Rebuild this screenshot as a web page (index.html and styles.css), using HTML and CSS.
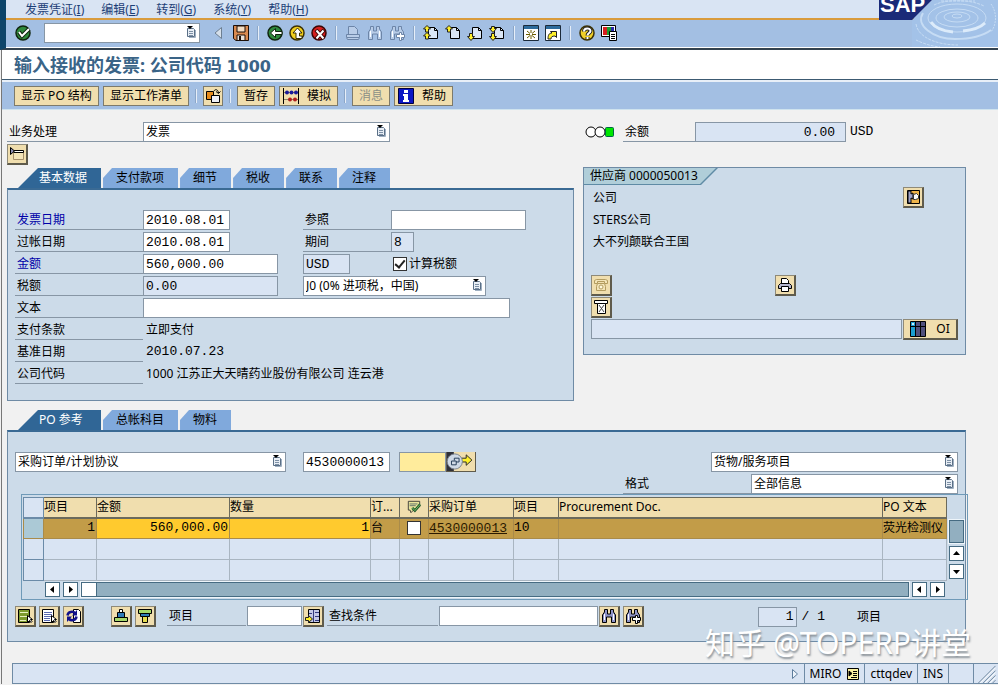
FILE: index.html
```html
<!DOCTYPE html>
<html lang="zh-CN">
<head>
  <meta charset="UTF-8" />
  <meta name="viewport" content="width=device-width, initial-scale=1.0" />
  <title>输入接收的发票: 公司代码 1000</title>
  <link rel="stylesheet" href="styles.css">
</head>
<body>
  <!-- Icon set -->
  <svg class="sprite" aria-hidden="true">
    <symbol id="i-list" viewBox="0 0 10 12">
      <path d="M1.5 2.5h6l1 1v7h-7z" fill="#e8eef5" stroke="#5a6f86"/>
      <path d="M9.5 4v7.5H3" fill="none" stroke="#9fb0c2"/>
      <path d="M3 5.5h4M3 7.5h4M3 9.5h4" stroke="#7d90a5"/>
      <path d="M1 0h6L4 3z" fill="#000"/>
    </symbol>
    <symbol id="i-ok" viewBox="0 0 16 16">
      <circle cx="8" cy="8" r="7" fill="#2f8a3c" stroke="#10240f" stroke-width="1.5"/>
      <path d="M4 7l3 4 7-7" fill="none" stroke="#10240f" stroke-width="4"/>
      <path d="M4 7l3 4 7-7" fill="none" stroke="#fff" stroke-width="2"/>
    </symbol>
    <symbol id="i-tri" viewBox="0 0 16 16">
      <path d="M10.500 2.500v11L4 8z" fill="#d5dfea" stroke="#6d7f92"/>
    </symbol>
    <symbol id="i-save" viewBox="0 0 16 16">
      <path d="M.5 .5h15v15H3l-2.500-2z" fill="#d98a50" stroke="#1c0f08"/>
      <path d="M4 1h8v6H4z" fill="#f3dcc0" stroke="#1c0f08"/>
      <path d="M4 15v-5h8v5" fill="#e8e2da" stroke="#1c0f08"/>
      <path d="M6 11h2v4H6z" fill="#1c0f08"/>
    </symbol>
    <symbol id="i-back" viewBox="0 0 16 16">
      <circle cx="8" cy="8" r="7" fill="#2f8a3c" stroke="#10240f" stroke-width="1.500"/>
      <path d="M3.500 8l5-4.500v3H15v3H8.500v3z" fill="#fff" stroke="#10240f"/>
    </symbol>
    <symbol id="i-exit" viewBox="0 0 16 16">
      <circle cx="8" cy="8" r="7" fill="#f2cf1d" stroke="#3b3004" stroke-width="1.500"/>
      <path d="M8.500 3l4.500 5h-2.500v3H13v2.500H7V8H4z" fill="#fff" stroke="#3b3004"/>
    </symbol>
    <symbol id="i-cancel" viewBox="0 0 16 16">
      <circle cx="8" cy="8" r="7" fill="#d61f1f" stroke="#3a0505" stroke-width="1.500"/>
      <path d="M5 5l8 9M13 5l-8 9" stroke="#3a0505" stroke-width="4"/>
      <path d="M5.500 5.500l7 8M12.500 5.500l-7 8" stroke="#fff" stroke-width="2"/>
    </symbol>
    <symbol id="i-print-off" viewBox="0 0 16 16">
      <path d="M3.500 9.500v-8h6l3 3v5z" fill="#b9cde8" stroke="#6c85a8"/>
      <path d="M1.500 9.500h13v3l-1 2h-11l-1-2zM2 12.500h12" fill="#b9cde8" stroke="#6c85a8"/>
    </symbol>
    <symbol id="i-find" viewBox="0 0 16 16">
      <path d="M1.500 14.500V7l2-3V1.500h3V6h3V1.500h3V4l2 3v7.500h-4V9h-5v5.500z" fill="var(--fill,#8f94c8)" stroke="var(--ink,#000)"/>
      <path d="M3.500 6v6M12.500 6v6" stroke="#fff"/>
    </symbol>
    <symbol id="i-find-next" viewBox="0 0 16 16">
      <path d="M1.500 14.500V7l2-3V1.500h3V6h3V1.500h3V4l2 3v7.500h-4V9h-5v5.500z" fill="var(--fill,#8f94c8)" stroke="var(--ink,#000)"/>
      <path d="M3.500 6v6" stroke="#fff"/>
      <path d="M10.500 7.500h2v2h3v3h-3v3h-2v-3h-3v-3h3z" fill="#fff" stroke="var(--ink,#000)"/>
    </symbol>
    <symbol id="i-page" viewBox="0 0 16 16">
      <path d="M5.500 2.500h6l3 3v8h-9z" fill="#dbe7f6" stroke="#000"/>
      <path d="M11.500 2.500v3h3" fill="none" stroke="#000"/>
    </symbol>
    <symbol id="i-up" viewBox="0 0 8 8">
      <path d="M4 .5l3.500 3.500H5.500v3h-3V4H.5z" fill="#fff029" stroke="#222" />
    </symbol>
    <symbol id="i-first" viewBox="0 0 16 16">
      <use href="#i-page"/><use href="#i-up" width="8" height="8"/><use href="#i-up" y="7" width="8" height="8"/>
    </symbol>
    <symbol id="i-prev" viewBox="0 0 16 16">
      <use href="#i-page"/><use href="#i-up" width="8" height="8"/>
    </symbol>
    <symbol id="i-next" viewBox="0 0 16 16">
      <use href="#i-page"/><path d="M2.500 8.500h3v3h2L4 15.500.5 11.500h2z" fill="#fff029" stroke="#222"/>
    </symbol>
    <symbol id="i-last" viewBox="0 0 16 16">
      <use href="#i-page"/>
      <path d="M2.500 1.500h3v2h2L4 7.500.5 3.500h2zM2.500 8.500h3v3h2L4 15.500.5 11.500h2z" fill="#fff029" stroke="#222"/>
    </symbol>
    <symbol id="i-session" viewBox="0 0 16 16">
      <path d="M.5.5h15v15H.5z" fill="#fff" stroke="#1b2a3a"/>
      <path d="M1 1h14v3H1z" fill="#2d6b9c"/>
      <path d="M8 5v3M8 10v4M3 9.500h4M9 9.500h4M4 6l3 2.500M12 6L9 8.500M4 13l3-2.500M12 13l-3-2.500" stroke="#6a5c00"/>
    </symbol>
    <symbol id="i-shortcut" viewBox="0 0 16 16">
      <path d="M.5.5h15v15H.5z" fill="#fff" stroke="#1b2a3a"/>
      <path d="M1 1h14v3H1z" fill="#2d6b9c"/>
      <path d="M3 14c0-4 1-6 4-6L5.500 6.500h6v6L10 11c-3 0-4 1-4 3z" fill="#fff029" stroke="#222"/>
    </symbol>
    <symbol id="i-help" viewBox="0 0 16 16">
      <circle cx="8" cy="8" r="7" fill="#f0cf28" stroke="#3b3004" stroke-width="1.500"/>
      <path d="M5 6.500C5 2.500 11.500 2.500 11.500 6c0 2-3 2-3 4.500M8.500 12v2" fill="none" stroke="#222" stroke-width="4"/>
      <path d="M5 6.500C5 2.500 11.500 2.500 11.500 6c0 2-3 2-3 4.500M8.500 12v2" fill="none" stroke="#fff" stroke-width="2"/>
    </symbol>
    <symbol id="i-layout" viewBox="0 0 16 16">
      <path d="M.5.5h14v11H.5z" fill="#fff" stroke="#000"/>
      <path d="M2 2h4v8H2z" fill="#d61f1f"/><path d="M6 2h4v8H6z" fill="#1e9b2d"/><path d="M10 2h3v8h-3z" fill="#2626a8"/>
      <path d="M8.500 6.500h7v9h-7z" fill="#fff" stroke="#000"/>
      <path d="M10 9.500h4M10 11.500h4M10 13.500h4" stroke="#000"/>
    </symbol>
    <symbol id="i-other" viewBox="0 0 16 16">
      <path d="M1.500 3.500h7v8h-7z" fill="#e58a1a" stroke="#000"/>
      <path d="M6.500 7.500h8v7h-8z" fill="#eef0f6" stroke="#000"/>
      <path d="M9 3c1-2 4-2 4.500 2M11 3.500l2.500 2 2-2" fill="none" stroke="#000"/>
    </symbol>
    <symbol id="i-simulate" viewBox="0 0 16 16">
      <path d="M.5 0v16M15.500 0v16" stroke="#000"/>
      <path d="M1 4.500h14M1 11.500h14" stroke="#8a8468"/>
      <circle cx="4" cy="4.500" r="2" fill="#1a1a9a"/><circle cx="8.500" cy="4.500" r="2" fill="#1a1a9a"/><circle cx="13" cy="4.500" r="2" fill="#1a1a9a"/>
      <circle cx="7" cy="11.500" r="2" fill="#b01c1c"/><circle cx="12" cy="11.500" r="2" fill="#b01c1c"/>
    </symbol>
    <symbol id="i-info" viewBox="0 0 16 16">
      <path d="M.5.5h15v15H.5z" fill="#0b16c4" stroke="#000040"/>
      <path d="M6 2h4v3H6zM5 6h5v6h1v2H5v-2h1V8H5z" fill="#fff"/>
    </symbol>
    <symbol id="i-folder" viewBox="0 0 16 16">
      <path d="M4.500 6v7.500h10V6" fill="#f3e4b8" stroke="#a58e6a"/>
      <path d="M1.500 1.500v7l4-3.500z" fill="#8c8cb0" stroke="#000"/>
      <path d="M5 4.500h9.500v2H5z" fill="#fff" stroke="#000"/>
    </symbol>
    <symbol id="i-vendor" viewBox="0 0 16 16">
      <path d="M2.500 1.500h12v13h-12z" fill="#f0b54a" stroke="#000"/>
      <path d="M3 2h3v3l2-1v6l-2-1v5H3z" fill="#9ea2c8" stroke="#000"/>
      <path d="M8.500 5.500l3-1 2 2v3l-3 1h-2z" fill="#fff" stroke="#333"/>
    </symbol>
    <symbol id="i-phone" viewBox="0 0 16 16">
      <path d="M1.500 6.500v-3l2-1h9l2 1v3h-3v-2h-7v2z" fill="#f3e4b8" stroke="#b39c5f"/>
      <path d="M4.500 6.500h7l1 3v4h-9v-4z" fill="#f3e4b8" stroke="#b39c5f"/>
      <circle cx="8" cy="10" r="2" fill="#fff8dc" stroke="#b39c5f"/>
    </symbol>
    <symbol id="i-mail" viewBox="0 0 16 16">
      <path d="M1.500 1.500h13v3h-13z" fill="#fff" stroke="#000"/>
      <path d="M4.500 4.500h8v10h-8z" fill="#fff" stroke="#000"/>
      <path d="M6 6l5 7M11 6l-5 7" stroke="#444"/>
    </symbol>
    <symbol id="i-print" viewBox="0 0 16 16">
      <path d="M4.500 6.500v-5h5l2 2v3z" fill="#fff" stroke="#000"/>
      <path d="M3.500 6.500h9l2 2v3h-13v-3z" fill="#b6b8cf" stroke="#000"/>
      <path d="M4.500 9.500h7v5h-7z" fill="#fff" stroke="#000"/>
    </symbol>
    <symbol id="i-grid" viewBox="0 0 16 16">
      <path d="M.5.500h15v15H.5z" fill="#50507c" stroke="#000"/>
      <path d="M1 1h4v14H1z" fill="#1b9ed0"/>
      <path d="M5.500 1v14M10.500 1v14M1 5.500h14" stroke="#000"/>
      <path d="M2 2h2v2H2z" fill="#c9ecfa"/>
    </symbol>
    <symbol id="i-note" viewBox="0 0 16 16">
      <path d="M1.500 1.500h13v6l-4 4h-3l-3 3-1-3h-2z" fill="#e9e59b" stroke="#333"/>
      <path d="M3 4.500h9M3 6.500h7" stroke="#566"/>
      <path d="M6 9l3 3 6-7" fill="none" stroke="#1c5a2a" stroke-width="3"/>
      <path d="M6 9l3 3 6-7" fill="none" stroke="#86c96f"/>
    </symbol>
    <symbol id="i-go" viewBox="0 0 30 20">
      <path d="M0 0h8v20H0z" fill="#2f3038"/>
      <path d="M16 6.500h5V3l6 5.500-6 5.500v-3.500h-5z" fill="#fff029" stroke="#222"/>
      <circle cx="9" cy="10" r="8" fill="#cfd9e6" stroke="#777f8c"/>
      <path d="M5.500 9.500h5v4h-5zM8.500 9V6.500h5v4h-3" fill="none" stroke="#223a55"/>
    </symbol>
    <symbol id="i-sel-all" viewBox="0 0 16 16">
      <path d="M1.500 1.500h11v13h-11z" fill="#7d9a2c" stroke="#000"/>
      <path d="M3 4.500h8M3 8.500h8M3 12.500h6" stroke="#e9f2c0"/>
      <path d="M10.500 7.500v7l2-2 1.500 2 1-1-1.500-2h2z" fill="#fff" stroke="#000"/>
    </symbol>
    <symbol id="i-desel" viewBox="0 0 16 16">
      <path d="M1.500 1.500h11v13h-11z" fill="#fff" stroke="#000"/>
      <path d="M3 4.500h8M3 6.500h8M3 8.500h7M3 10.500h6M3 12.500h6" stroke="#5a68b0"/>
      <path d="M10.500 7.500v7l2-2 1.500 2 1-1-1.500-2h2z" fill="#fff" stroke="#000"/>
    </symbol>
    <symbol id="i-refresh" viewBox="0 0 16 16">
      <path d="M8.500 1.500h5l2 2v11h-7z" fill="#fff" stroke="#000"/>
      <path d="M2.500 7.500C3 3.500 8 3 10 5M11.500 8.500c-.5 4-5.500 4.500-7.500 2.500" fill="none" stroke="#10108a" stroke-width="2.500"/>
      <path d="M12 2v5.500H7zM2 14V8.500h5z" fill="#10108a"/>
    </symbol>
    <symbol id="i-asc" viewBox="0 0 16 16">
      <path d="M6.500 1.500h3v3h-3z" fill="#fff" stroke="#000"/>
      <path d="M4.500 4.500h7v5h-7z" fill="#2f7ab8" stroke="#000"/>
      <path d="M1.500 9.500h13v4h-13z" fill="#a6d86a" stroke="#000"/>
    </symbol>
    <symbol id="i-desc" viewBox="0 0 16 16">
      <path d="M1.500 1.500h13v4h-13z" fill="#a6d86a" stroke="#000"/>
      <path d="M3.500 5.500h9v3h-9z" fill="#2f7ab8" stroke="#000"/>
      <path d="M5.500 8.500h5v6h-5z" fill="#e6dc50" stroke="#000"/>
    </symbol>
    <symbol id="i-position" viewBox="0 0 16 16">
      <path d="M3.500 1.500h11v13h-11z" fill="#c5cae8" stroke="#000"/>
      <path d="M8.500 2v12M10 4.500h4M10 8.500h4M10 12.500h4M4 5.500h3" stroke="#343c80"/>
      <path d="M.5 9.500h3v-2l4 3.500-4 3.500v-2h-3z" fill="#fff029" stroke="#222"/>
    </symbol>
    <symbol id="i-detail" viewBox="0 0 12 12">
      <path d="M.5.500h11v11H.5z" fill="#fdf3a0" stroke="#000"/>
      <path d="M2 3l3 2.500L2 8zM6 3.500h4M6 5.500h4M6 7.500h4M4 9.500h6" stroke="#000"/>
    </symbol>
  </svg>

  <header class="top">
    <nav class="menu">
      <a href="#">发票凭证(<u>I</u>)</a>
      <a href="#">编辑(<u>E</u>)</a>
      <a href="#">转到(<u>G</u>)</a>
      <a href="#">系统(<u>Y</u>)</a>
      <a href="#">帮助(<u>H</u>)</a>
    </nav>
    <div class="toolbar">
      <button class="ic" aria-label="回车"><svg><use href="#i-ok"/></svg></button>
      <div class="pick command">
        <input type="text" aria-label="命令">
        <svg><use href="#i-list"/></svg>
      </div>
      <button class="ic" aria-label="收起"><svg><use href="#i-tri"/></svg></button>
      <button class="ic" aria-label="保存"><svg><use href="#i-save"/></svg></button>
      <span class="sep"></span>
      <button class="ic" aria-label="返回"><svg><use href="#i-back"/></svg></button>
      <button class="ic" aria-label="退出"><svg><use href="#i-exit"/></svg></button>
      <button class="ic" aria-label="取消"><svg><use href="#i-cancel"/></svg></button>
      <span class="sep"></span>
      <button class="ic off" aria-label="打印" disabled><svg><use href="#i-print-off"/></svg></button>
      <button class="ic off" aria-label="查找" disabled><svg><use href="#i-find"/></svg></button>
      <button class="ic off" aria-label="查找下一个" disabled><svg><use href="#i-find-next"/></svg></button>
      <span class="sep"></span>
      <button class="ic" aria-label="首页"><svg><use href="#i-first"/></svg></button>
      <button class="ic" aria-label="上一页"><svg><use href="#i-prev"/></svg></button>
      <button class="ic" aria-label="下一页"><svg><use href="#i-next"/></svg></button>
      <button class="ic" aria-label="末页"><svg><use href="#i-last"/></svg></button>
      <span class="sep"></span>
      <button class="ic" aria-label="新会话"><svg><use href="#i-session"/></svg></button>
      <button class="ic" aria-label="快捷方式"><svg><use href="#i-shortcut"/></svg></button>
      <span class="sep"></span>
      <button class="ic" aria-label="帮助"><svg><use href="#i-help"/></svg></button>
      <button class="ic" aria-label="布局"><svg><use href="#i-layout"/></svg></button>
    </div>
    <svg class="banner" viewBox="0 0 119 47" role="img" aria-label="SAP">
      <path d="M53 0h66v47H33V20z" fill="#a3c2e8"/>
      <g fill="none" stroke="#c6dcf4">
        <ellipse cx="78" cy="16" rx="5" ry="2"/>
        <ellipse cx="78" cy="17" rx="13" ry="5"/>
        <ellipse cx="78" cy="18" rx="21" ry="9"/>
        <ellipse cx="78" cy="18" rx="29" ry="14"/>
        <path d="M44 13c-8 12 10 26 32 26 14 0 28-3 36-9" stroke-width="2"/>
        <path d="M55 5c12-6 36-6 50 1M37 24c2 14 22 21 42 21M37 40c6 3 14 6 24 7M62 1h34" stroke-dasharray="3 1"/>
        <path d="M52 22c4 6 12 9 22 10M84 31c10-1 18-4 22-8" stroke="#dcebfa" stroke-width="3"/>
        <path d="M112 4c6 8 6 20 0 28" stroke-dasharray="2 1"/>
      </g>
      <path d="M0 0h53L33 20H0z" fill="#1b2a78"/>
      <text x="1" y="12" class="logo-text">SAP</text>
    </svg>
  </header>

  <div class="session">
    <h1>输入接收的发票: 公司代码 <span>1000</span></h1>

    <div class="app-bar">
      <button class="btn">显示 PO 结构</button>
      <button class="btn">显示工作清单</button>
      <span class="sep"></span>
      <button class="btn only" aria-label="其他发票凭证"><svg><use href="#i-other"/></svg></button>
      <span class="sep"></span>
      <button class="btn">暂存</button>
      <button class="btn"><svg><use href="#i-simulate"/></svg>模拟</button>
      <span class="sep"></span>
      <button class="btn" disabled>消息</button>
      <button class="btn"><svg><use href="#i-info"/></svg>帮助</button>
    </div>

    <main>
      <div class="upper">
        <section class="left">
          <div class="line">
            <label class="lbl lead" for="trans">业务处理</label>
            <div class="pick w-trans"><select id="trans"><option>发票</option></select><svg><use href="#i-list"/></svg></div>
          </div>
          <button class="sq" aria-label="显示概览"><svg><use href="#i-folder"/></svg></button>

          <div class="tabs" role="tablist">
            <button class="tab on" role="tab" aria-selected="true">基本数据</button>
            <button class="tab" role="tab">支付款项</button>
            <button class="tab" role="tab">细节</button>
            <button class="tab" role="tab">税收</button>
            <button class="tab" role="tab">联系</button>
            <button class="tab" role="tab">注释</button>
          </div>
          <div class="panel basic">
            <label class="lbl req" for="invdate">发票日期</label>
            <input class="w-date" id="invdate" value="2010.08.01">
            <label class="lbl" for="ref">参照</label>
            <input class="w-amt" id="ref">

            <label class="lbl" for="postdate">过帐日期</label>
            <input class="w-date" id="postdate" value="2010.08.01">
            <label class="lbl" for="period">期间</label>
            <input class="w-num" id="period" value="8" readonly>

            <label class="lbl req" for="amount">金额</label>
            <input class="w-amt" id="amount" value="560,000.00">
            <input class="w-cur" aria-label="货币" value="USD" readonly>
            <label class="check"><input type="checkbox" checked>计算税额</label>

            <label class="lbl" for="tax">税额</label>
            <input class="w-amt" id="tax" value="0.00" readonly>
            <div class="pick w-tax"><select aria-label="税码"><option>J0 (0% 进项税，中国)</option></select><svg><use href="#i-list"/></svg></div>

            <label class="lbl" for="text">文本</label>
            <input class="w-text" id="text">

            <span class="lbl">支付条款</span>
            <span class="val">立即支付</span>
            <span class="lbl">基准日期</span>
            <span class="val mono">2010.07.23</span>
            <span class="lbl">公司代码</span>
            <span class="val">1000 江苏正大天晴药业股份有限公司 连云港</span>
          </div>
        </section>

        <section class="right">
          <div class="line balance">
            <svg class="lights" viewBox="0 0 30 12">
              <circle cx="6" cy="6" r="5" fill="#fff" stroke="#000"/>
              <circle cx="15" cy="6" r="5" fill="#fff" stroke="#000"/>
              <rect x="20.500" y="1.500" width="8" height="9" rx="1" fill="#00e600" stroke="#064"/>
            </svg>
            <label class="lbl w-bal-lbl" for="balance">余额</label>
            <input class="w-bal num" id="balance" value="0.00" readonly>
            <span class="mono unit">USD</span>
          </div>
          <div class="vendor">
            <h2><span>供应商 0000050013</span></h2>
            <div class="vendor-head">
              <address>公司<br>STERS公司<br>大不列颠联合王国</address>
              <button class="sq" aria-label="供应商主数据"><svg><use href="#i-vendor"/></svg></button>
            </div>
            <div class="contact">
              <div>
                <button class="sq" aria-label="电话" disabled><svg><use href="#i-phone"/></svg></button>
                <button class="sq" aria-label="邮件"><svg><use href="#i-mail"/></svg></button>
              </div>
              <button class="sq" aria-label="打印"><svg><use href="#i-print"/></svg></button>
            </div>
            <div class="bank">
              <input aria-label="银行" readonly>
              <button class="sq wide"><svg><use href="#i-grid"/></svg>OI</button>
            </div>
          </div>
        </section>
      </div>

      <div class="tabs" role="tablist">
        <button class="tab on" role="tab" aria-selected="true">PO 参考</button>
        <button class="tab" role="tab">总帐科目</button>
        <button class="tab" role="tab">物料</button>
      </div>
      <div class="panel po">
        <div class="po-filter">
          <div class="pick w-ref"><select aria-label="参考凭证类别"><option>采购订单/计划协议</option></select><svg><use href="#i-list"/></svg></div>
          <input class="w-date" aria-label="采购订单" value="4530000013">
          <div class="go">
            <input aria-label="项目" class="hot">
            <button aria-label="多重选择"><svg><use href="#i-go"/></svg></button>
          </div>
          <div class="po-view">
            <div class="pick w-trans"><select aria-label="项目类型"><option>货物/服务项目</option></select><svg><use href="#i-list"/></svg></div>
            <div class="line">
              <label class="lbl w-fmt" for="fmt">格式</label>
              <div class="pick w-layout"><select id="fmt"><option>全部信息</option></select><svg><use href="#i-list"/></svg></div>
            </div>
          </div>
        </div>

        <div class="grid-box">
          <table>
            <colgroup>
              <col class="c-sel"><col class="c-item"><col class="c-amt"><col class="c-qty"><col class="c-unit">
              <col class="c-unit"><col class="c-po"><col class="c-poitem"><col><col class="c-text">
            </colgroup>
            <thead>
              <tr>
                <th></th><th>项目</th><th>金额</th><th>数量</th><th>订...</th>
                <th class="mid"><svg><use href="#i-note"/></svg></th>
                <th>采购订单</th><th>项目</th><th>Procurement Doc.</th><th>PO 文本</th>
              </tr>
            </thead>
            <tbody>
              <tr class="picked">
                <td></td><td class="num">1</td><td class="num edit">560,000.00</td><td class="num edit">1</td><td>台</td>
                <td class="mid"><input type="checkbox" aria-label="已记帐"></td>
                <td><a href="#" class="mono">4530000013</a></td><td class="mono">10</td><td></td><td>荧光检测仪</td>
              </tr>
              <tr><td></td><td></td><td></td><td></td><td></td><td></td><td></td><td></td><td></td><td></td></tr>
              <tr><td></td><td></td><td></td><td></td><td></td><td></td><td></td><td></td><td></td><td></td></tr>
            </tbody>
          </table>
          <div class="vscroll">
            <span class="track"></span>
            <button aria-label="上" class="arr"><svg viewBox="0 0 13 13"><path d="M3 8h7L6.500 4z"/></svg></button>
            <button aria-label="下" class="arr"><svg viewBox="0 0 13 13"><path d="M3 5h7L6.500 9z"/></svg></button>
          </div>
          <div class="hscroll">
            <button aria-label="最左" class="arr"><svg viewBox="0 0 13 13"><path d="M8 3v7L4 6.500z"/></svg></button>
            <button aria-label="右移" class="arr"><svg viewBox="0 0 13 13"><path d="M5 3v7l4-3.500z"/></svg></button>
            <span class="track"><i></i></span>
            <button aria-label="左移" class="arr"><svg viewBox="0 0 13 13"><path d="M8 3v7L4 6.500z"/></svg></button>
            <button aria-label="最右" class="arr"><svg viewBox="0 0 13 13"><path d="M5 3v7l4-3.500z"/></svg></button>
          </div>
        </div>

        <div class="grid-tools">
          <div class="set">
            <button class="sq" aria-label="全选"><svg><use href="#i-sel-all"/></svg></button>
            <button class="sq" aria-label="取消全选"><svg><use href="#i-desel"/></svg></button>
            <button class="sq" aria-label="刷新"><svg><use href="#i-refresh"/></svg></button>
          </div>
          <div class="set">
            <button class="sq" aria-label="升序"><svg><use href="#i-asc"/></svg></button>
            <button class="sq" aria-label="降序"><svg><use href="#i-desc"/></svg></button>
          </div>
          <div class="line">
            <label class="lbl w-pos-lbl" for="pos">项目</label>
            <input class="w-pos" id="pos">
            <button class="sq" aria-label="定位"><svg><use href="#i-position"/></svg></button>
          </div>
          <div class="line">
            <label class="lbl w-find-lbl" for="find">查找条件</label>
            <input class="w-find" id="find">
            <div class="set">
              <button class="sq" aria-label="查找"><svg><use href="#i-find"/></svg></button>
              <button class="sq" aria-label="查找下一个"><svg><use href="#i-find-next"/></svg></button>
            </div>
          </div>
          <div class="count">
            <input class="w-count num" aria-label="当前项目" value="1" readonly>
            <span class="mono">/ 1</span>
            <span class="unit-name">项目</span>
          </div>
        </div>
      </div>
    </main>

    <footer class="status">
      <span class="msg"></span>
      <svg class="tri" viewBox="0 0 10 12"><path d="M2.500 1.500v9l5-4.500z" fill="#eef4fb" stroke="#5c7c9c"/></svg>
      <span>MIRO <svg class="detail"><use href="#i-detail"/></svg></span>
      <span>cttqdev</span>
      <span>INS</span>
      <span class="blank"></span>
      <svg class="grip" viewBox="0 0 24 20"><path d="M4 20L22 2M9 20L22 7M14 20l8-8M19 20l3-3" stroke="#6d859c"/><path d="M6 20L22 4M11 20L22 9M16 20l6-6" stroke="#fff"/></svg>
    </footer>
  </div>

  <div class="watermark">知乎 @TOPERP讲堂</div>
</body>
</html>
```
FILE: styles.css
```css
* { box-sizing: border-box; }
body {
  margin: 0;
  background: #f1f1f1;
  color: #000;
  font-family: 'Noto Sans', 'Noto Sans CJK SC', sans-serif;
  font-size: 12px;
  line-height: 18px;
}
.sprite { display: none; }
button, input, select {
  font: inherit;
  color: inherit;
  margin: 0;
  padding: 0;
  border-radius: 0;
}
input, .mono, .num {
  font-family: 'Liberation Mono', 'Noto Sans CJK SC', monospace;
  font-size: 13px;
}
input, select {
  height: 20px;
  min-width: 0;
  padding: 0 2px;
  border: 1px solid #8796a5;
  background: #fff;
}
input:read-only { background: #d9e4f3; }
input[type=checkbox] {
  appearance: none;
  flex: none;
  width: 14px; height: 14px;
  border: 1px solid #333;
  background: #fff;
}
input[type=checkbox]:checked::before {
  content: "";
  display: block;
  width: 4px; height: 8px;
  margin: 0 auto;
  border: solid #222;
  border-width: 0 2px 2px 0;
  transform: rotate(40deg);
}
.num { text-align: right; }
.line { display: flex; }

/* header */
.top {
  position: relative;
  border-left: 6px solid #0d4469;
  border-bottom: 2px solid #33424f;
}
.menu {
  display: flex;
  gap: 17px;
  height: 20px;
  padding-left: 19px;
  background: #d9e4f3;
  border-bottom: 2px solid #d99b3c;
}
.menu a { color: #1d3f77; line-height: 20px; text-decoration: none; }
.toolbar {
  display: flex;
  align-items: center;
  gap: 6px;
  height: 28px;
  padding: 0 0 1px 9px;
  background: #a3bfe3;
  border-bottom: 1px solid #fff;
}
.ic {
  width: 16px; height: 16px;
  border: none;
  background: none;
}
.ic svg { display: block; width: 16px; height: 16px; }
.ic.off { --fill: #b9cde8; --ink: #6c85a8; }
.command { width: 156px; margin: 0 5px 0 7px; }
.sep {
  width: 2px; height: 14px;
  margin: 0 2px;
  background: #e6eef8;
  border-left: 1px solid #8ba6c8;
}
.banner {
  position: absolute;
  top: 0; right: 0;
  width: 119px; height: 47px;
}
.logo-text {
  font: bold 22px 'Liberation Sans', sans-serif;
  fill: #fff;
}

/* value with a list icon at its end */
.pick { position: relative; }
.pick select, .pick input {
  display: block;
  width: 100%;
  appearance: none;
}
.pick svg {
  position: absolute;
  top: 3px; right: 4px;
  width: 10px; height: 12px;
  pointer-events: none;
}

.session { margin-left: 1px; border-left: 1px solid #777; }
h1 {
  margin: 0;
  height: 30px;
  padding-left: 12px;
  background: #fff;
  border-bottom: 1px solid #3c5a72;
  color: #3a6487;
  font-size: 18px;
  line-height: 30px;
}
h1 span { font-family: 'DejaVu Sans', sans-serif; font-size: 16px; }
.app-bar {
  display: flex;
  align-items: center;
  gap: 4px;
  height: 30px;
  padding-left: 12px;
  background: #a3bfe3;
  border-top: 2px solid #e8eff8;
  border-bottom: 1px solid #cfe3ee;
}
.btn {
  display: flex;
  align-items: center;
  gap: 8px;
  height: 20px;
  padding: 0 6px;
  border: 1px solid #7d7a6b;
  background: #f0deae;
}
.btn svg { width: 16px; height: 16px; }
.btn svg:first-child { margin-left: -3px; }
.btn.only { padding: 0 4px; }
.btn.only svg { margin-right: -3px; }
.btn:disabled { color: #8b8f86; }

main { padding: 12px 32px 0 5px; }
.upper {
  display: grid;
  grid-template-columns: minmax(0, 567fr) minmax(0, 383fr);
  gap: 9px;
  margin-bottom: 9px;
}
.lbl {
  height: 20px;
  padding-left: 2px;
  border-bottom: 1px solid #8796a5;
  line-height: 20px;
}
.lbl.req { color: #0000a8; }
.lead { width: 136px; }
.sq {
  display: flex;
  align-items: center;
  justify-content: center;
  flex: none;
  width: 21px; height: 21px;
  border: 1px solid #8f8a78;
  border-right: 2px solid #5f5b4c;
  border-bottom: 2px solid #5f5b4c;
  background: #f0deae;
}
.sq svg { width: 16px; height: 16px; flex: none; }
.left > .sq { margin: 2px 0 3px; }
.w-trans { width: 247px; }
.w-date { width: 87px; }
.w-amt { width: 135px; }
.w-num { width: 23px; }
.w-cur { width: 47px; }
.w-tax { width: 183px; grid-column: span 2; }
.w-text { width: 367px; grid-column: span 3; }

.tabs {
  display: flex;
  gap: 2px;
  padding-left: 11px;
}
.tab {
  height: 20px;
  padding: 0 14px 0 13px;
  border: none;
  background: #80a9dc;
  text-align: left;
  clip-path: polygon(9px 0, 100% 0, 100% 100%, 0 100%, 0 10px);
}
.tab.on {
  min-width: 83px;
  padding-left: 21px;
  background: #306696;
  color: #fff;
  clip-path: polygon(20px 0, 100% 0, 100% 100%, 0 100%);
}
.panel {
  padding: 20px 7px 16px;
  background: #ccdbe9;
  border: 1px solid #6f8ba5;
  border-top: 2px solid #3a6a94;
}
.basic {
  display: grid;
  grid-template-columns: 128px 160px 88px 1fr;
  row-gap: 2px;
}
.val { grid-column: span 3; padding-left: 3px; line-height: 20px; white-space: nowrap; }
.check { display: flex; align-items: center; gap: 2px; padding-left: 2px; }

/* balance and vendor */
.balance { align-items: center; padding-left: 2px; }
.lights { width: 30px; height: 12px; margin-right: 8px; }
.w-bal-lbl { width: 72px; }
.w-bal { width: 151px; padding-right: 10px; }
.unit { margin-left: 4px; }
.vendor {
  margin-top: 25px;
  height: 188px;
  border: 1px solid #6f8ba5;
  background: #ccdbe9;
}
.vendor h2 {
  width: 134px;
  height: 17px;
  margin: 0;
  background: #5f8ba5;
  font-size: 12px;
  font-weight: normal;
  line-height: 16px;
  clip-path: polygon(0 0, 100% 0, 117px 100%, 0 100%);
}
.vendor h2 span {
  display: block;
  height: 16px;
  padding-left: 6px;
  background: #b0ced9;
  clip-path: polygon(0 0, 132px 0, 116px 100%, 0 100%);
}
.vendor-head {
  display: flex;
  justify-content: space-between;
  padding: 2px 41px 0 9px;
}
.vendor-head address { font-style: normal; line-height: 22px; }
.contact {
  display: flex;
  gap: 163px;
  padding: 22px 0 0 7px;
}
.contact .sq + .sq { margin-top: 1px; }
.bank { display: flex; gap: 1px; padding: 1px 7px 0; }
.bank input { flex: 1; }
.sq.wide { width: 55px; gap: 10px; }

/* PO reference */
.panel.po { padding-bottom: 14px; }
.po-filter { display: flex; align-items: flex-start; }
.w-ref { width: 271px; margin-right: 17px; }
.go { display: flex; margin-left: 9px; }
.hot { width: 47px; background: #ffec9c; }
.go button {
  width: 30px; height: 20px;
  border: none;
  background: #f0deae;
  border-bottom: 1px solid #5f5b4c;
  border-right: 1px solid #5f5b4c;
}
.go svg { display: block; width: 29px; height: 19px; }
.po-view {
  display: flex;
  flex-direction: column;
  align-items: flex-end;
  gap: 2px;
  margin-left: auto;
}
.w-fmt { width: 128px; }
.w-layout { width: 207px; }

.grid-box {
  display: grid;
  grid-template-columns: minmax(0, 1fr) 19px;
  margin: 0 -10px 0 6px;
  padding: 2px 1px 0;
  border: 1px solid #6f9ab8;
}
table {
  width: 100%;
  table-layout: fixed;
  border-collapse: collapse;
}
.c-sel { width: 20px; }
.c-item { width: 53px; }
.c-amt { width: 133px; }
.c-qty { width: 141px; }
.c-unit { width: 29px; }
.c-po { width: 85px; }
.c-poitem { width: 45px; }
.c-text { width: 64px; }
th, td {
  height: 21px;
  padding: 0 1px 0 0;
  border: 1px solid #a9b5c1;
  text-align: left;
  line-height: 18px;
  white-space: nowrap;
  overflow: hidden;
}
th {
  height: 20px;
  background: #f0deae;
  border: 1px solid #6b6a5c;
  border-bottom-width: 2px;
  font-weight: normal;
}
td { background: #d9e4f3; }
th:first-child, td:first-child { background: #d9e4f3; border-color: #6b8ba8; }
.picked td { background: #c29c48; border-color: #a98b4a; }
.picked td:first-child { background: #abc9d6; }
.picked td.edit { background: #ffca2e; }
td.num { text-align: right; }
td a { color: #2b1a00; }
th.mid, td.mid { text-align: center; }
.mid svg, .mid input { display: block; width: 14px; height: 14px; margin: 0 auto; }
.vscroll {
  display: flex;
  flex-direction: column;
  justify-content: flex-end;
  align-items: center;
  gap: 3px;
  padding-bottom: 2px;
}
.track {
  background: #92afc0;
  border: 1px solid #466b82;
  outline: 1px solid #eef5fa;
}
.vscroll .track { width: 15px; height: 23px; }
.arr {
  width: 15px; height: 15px;
  border: 1px solid #466b82;
  background: #fff;
}
.arr svg { display: block; width: 13px; height: 13px; }
.hscroll {
  grid-column: span 2;
  display: flex;
  gap: 3px;
  padding: 1px 21px 2px 22px;
}
.hscroll .track { flex: 1; }
.track i { display: block; width: 15px; height: 13px; background: #fff; border-right: 1px solid #466b82; }

.grid-tools { display: flex; padding-top: 6px; }
.set { display: flex; gap: 3px; }
.grid-tools .set + .set { margin: 0 11px 0 27px; }
.grid-tools .line { gap: 1px; margin-right: 3px; }
.w-pos-lbl { width: 79px; }
.w-pos { width: 55px; }
.w-find-lbl { width: 111px; }
.w-find { width: 159px; }
.count { display: flex; align-items: center; gap: 5px; margin-left: auto; padding-right: 77px; }
.w-count { width: 39px; }
.unit-name { margin-left: 27px; }

.status {
  display: flex;
  align-items: center;
  height: 21px;
  margin: 21px 0 1px 10px;
  border: 1px solid #6f8ba5;
  border-right: none;
  background: #d9e4f3;
}
.status .msg { flex: 1; border: none; }
.status span {
  display: flex;
  align-items: center;
  gap: 6px;
  height: 19px;
  padding: 0 5px;
  border-left: 1px solid #6f8ba5;
}
.status .blank { width: 25px; }
.tri { width: 10px; height: 12px; margin-right: 4px; }
.detail { width: 12px; height: 12px; }
.grip { width: 25px; height: 19px; border-left: 1px solid #6f8ba5; }

.watermark {
  position: absolute;
  right: 27px;
  top: 622px;
  color: #fff;
  font-size: 30px;
  line-height: 42px;
  white-space: nowrap;
  text-shadow: 1px 2px 2px #8a9299;
  pointer-events: none;
}
```
